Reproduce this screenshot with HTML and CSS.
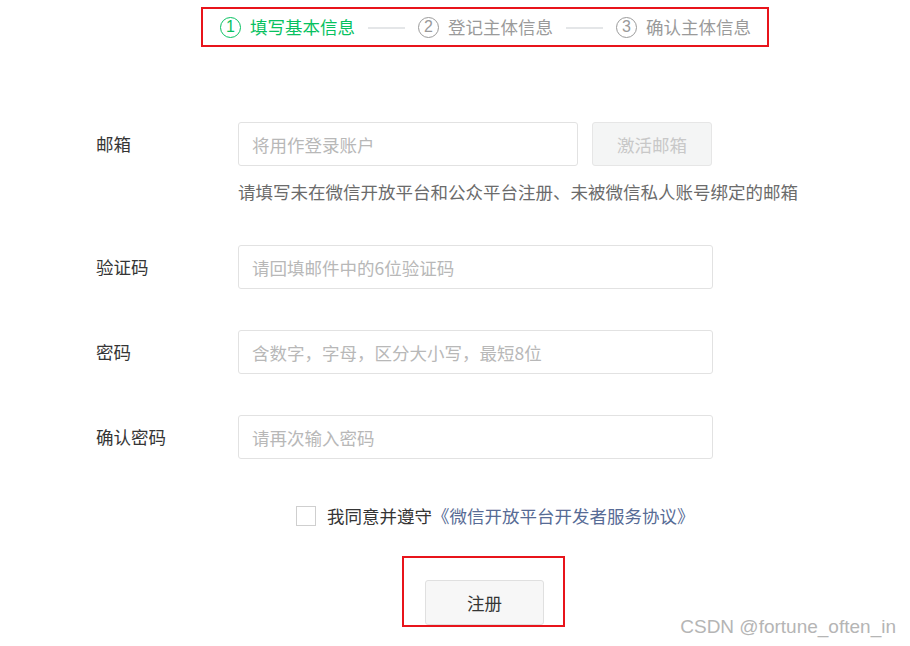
FILE: index.html
```html
<!DOCTYPE html>
<html lang="zh-CN">
<head>
<meta charset="utf-8">
<title>填写基本信息</title>
<link rel="stylesheet" href="styles.css">
</head>
<body>
<div class="page">
  <div class="steps">
    <span class="step step-active"><span class="num">1</span><span class="step-text">填写基本信息</span></span>
    <span class="step-line"></span>
    <span class="step"><span class="num">2</span><span class="step-text">登记主体信息</span></span>
    <span class="step-line"></span>
    <span class="step"><span class="num">3</span><span class="step-text">确认主体信息</span></span>
  </div>

  <form class="form">
    <div class="row row-first">
      <label class="label">邮箱</label>
      <div class="field">
        <input class="input input-short" type="text" placeholder="将用作登录账户">
        <button type="button" class="btn-activate">激活邮箱</button>
      </div>
    </div>
    <div class="hint">请填写未在微信开放平台和公众平台注册、未被微信私人账号绑定的邮箱</div>

    <div class="row row-code">
      <label class="label">验证码</label>
      <div class="field"><input class="input input-long" type="text" placeholder="请回填邮件中的6位验证码"></div>
    </div>
    <div class="row">
      <label class="label">密码</label>
      <div class="field"><input class="input input-long" type="password" placeholder="含数字，字母，区分大小写，最短8位"></div>
    </div>
    <div class="row">
      <label class="label">确认密码</label>
      <div class="field"><input class="input input-long" type="password" placeholder="请再次输入密码"></div>
    </div>

    <div class="agree">
      <span class="checkbox"></span>
      <span class="agree-text">我同意并遵守<a class="agree-link" href="#">《微信开放平台开发者服务协议》</a></span>
    </div>

    <div class="submit-box">
      <button type="button" class="btn-submit">注册</button>
    </div>
  </form>

  <div class="watermark">CSDN @fortune_often_in</div>
</div>
</body>
</html>
```

FILE: styles.css
```css
html, body {
  margin: 0;
  padding: 0;
  background: #ffffff;
}

body {
  font-family: "Noto Sans CJK SC", "Microsoft YaHei", "Noto Sans", sans-serif;
  color: #353535;
  width: 910px;
  height: 646px;
  overflow: hidden;
}

.page {
  position: relative;
  width: 910px;
  height: 646px;
  padding-top: 7px;
  box-sizing: border-box;
}

/* steps */
.steps {
  margin-left: 201px;
  width: 568px;
  height: 40px;
  box-sizing: border-box;
  border: 2px solid #e8141b;
  display: flex;
  align-items: center;
  padding: 0 0 0 17px;
}

.step {
  display: flex;
  align-items: center;
  color: #9a9a9a;
  font-size: 17.5px;
  line-height: 24px;
}

.step-active {
  color: #07c160;
}

.num {
  width: 21px;
  height: 21px;
  box-sizing: border-box;
  border: 1.2px solid currentColor;
  border-radius: 50%;
  display: flex;
  align-items: center;
  justify-content: center;
  font-family: "Liberation Sans", Arial, sans-serif;
  font-size: 16px;
  line-height: 1;
  margin-right: 9px;
}

.step-text {
  white-space: nowrap;
}

.step-line {
  width: 37px;
  height: 2px;
  background: #e4e6e8;
  margin: 2px 13px 0 13px;
}

/* form */
.form {
  margin-top: 75px;
}

.row {
  display: grid;
  grid-template-columns: 142px auto;
  align-items: center;
  padding-left: 96px;
  margin-top: 41px;
}

.row-first {
  margin-top: 0;
}

.row-code {
  margin-top: 40px;
}

.label {
  font-size: 17.5px;
  line-height: 24px;
  color: #353535;
}

.field {
  display: flex;
  align-items: center;
}

.input {
  height: 44px;
  box-sizing: border-box;
  border: 1px solid #e2e2e2;
  border-radius: 3px;
  padding: 0 13px;
  font-family: inherit;
  font-size: 17.5px;
  color: #353535;
  outline: none;
  background: #fff;
}

.input::placeholder {
  color: #b8b8b8;
}

.input-short {
  width: 340px;
}

.input-long {
  width: 475px;
}

.btn-activate {
  margin-left: 14px;
  width: 120px;
  height: 44px;
  box-sizing: border-box;
  border: 1px solid #e6e6e6;
  border-radius: 3px;
  background: #f4f5f5;
  color: #c8c8c8;
  font-family: inherit;
  font-size: 17.5px;
  padding: 0;
}

.hint {
  padding-left: 238px;
  margin-top: 13px;
  font-size: 17.5px;
  line-height: 26px;
  color: #6b6b6b;
  white-space: nowrap;
}

.agree {
  display: flex;
  align-items: center;
  padding-left: 296px;
  margin-top: 47px;
  height: 20px;
}

.checkbox {
  width: 20px;
  height: 20px;
  box-sizing: border-box;
  border: 1px solid #cfcfcf;
  background: #fff;
  flex: none;
}

.agree-text {
  margin-left: 11px;
  font-size: 17.5px;
  line-height: 24px;
  color: #353535;
  white-space: nowrap;
}

.agree-link {
  color: #576b95;
  text-decoration: none;
}

.submit-box {
  margin-top: 30px;
  margin-left: 402px;
  width: max-content;
  border: 2px solid #e8141b;
  padding: 22px 19px 0 21px;
}

.btn-submit {
  display: block;
  width: 119px;
  height: 45px;
  box-sizing: border-box;
  border: 1px solid #e0e0e0;
  border-radius: 3px;
  background: #f7f7f7;
  color: #353535;
  font-family: inherit;
  font-size: 17.5px;
  padding: 0;
}

.watermark {
  position: absolute;
  right: 14px;
  bottom: 10px;
  font-family: "Liberation Sans", Arial, sans-serif;
  font-size: 19px;
  line-height: 19px;
  color: #b5b5b5;
  white-space: nowrap;
}
```
